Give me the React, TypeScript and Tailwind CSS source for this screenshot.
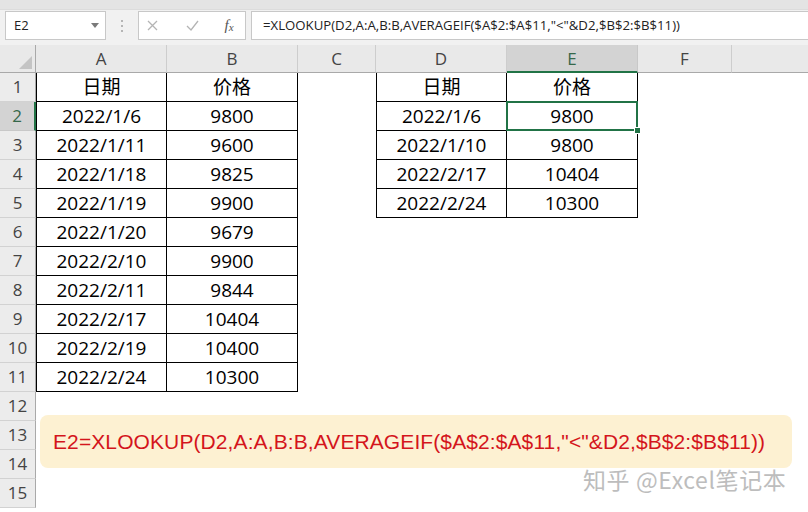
import React from 'react'

const COLS = ['A', 'B', 'C', 'D', 'E', 'F', 'G']

const COL_A = ['日期', '2022/1/6', '2022/1/11', '2022/1/18', '2022/1/19', '2022/1/20', '2022/2/10', '2022/2/11', '2022/2/17', '2022/2/19', '2022/2/24']
const COL_B = ['价格', '9800', '9600', '9825', '9900', '9679', '9900', '9844', '10404', '10400', '10300']
const COL_D = ['日期', '2022/1/6', '2022/1/10', '2022/2/17', '2022/2/24']
const COL_E = ['价格', '9800', '9800', '10404', '10300']

const FORMULA = '=XLOOKUP(D2,A:A,B:B,AVERAGEIF($A$2:$A$11,"<"&D2,$B$2:$B$11))'

function cellValue(col: string, row: number): string {
  if (col === 'A') return COL_A[row - 1] ?? ''
  if (col === 'B') return COL_B[row - 1] ?? ''
  if (col === 'D') return COL_D[row - 1] ?? ''
  if (col === 'E') return COL_E[row - 1] ?? ''
  return ''
}

function isBordered(col: string, row: number) {
  if ((col === 'A' || col === 'B') && row <= 11) return true
  if ((col === 'D' || col === 'E') && row <= 5) return true
  return false
}

function FormulaBar() {
  return (
    <div className="h-[45px] bg-[#f1f1f1] flex flex-col">
      <div className="h-[10px] bg-[#e4e4e4] border-b border-[#dcdcdc]" />
      <div className="flex items-stretch h-[29px] mt-[1px] pl-[5px]">
        {/* name box */}
        <div className="w-[101px] bg-white border border-[#c8c8c8] flex items-center justify-between pl-[8px] pr-[6px]">
          <span className="text-[13px] text-[#222] font-['Open_Sans',sans-serif]">E2</span>
          <svg width="8" height="5" viewBox="0 0 8 5">
            <path d="M0 0 L8 0 L4 5 Z" fill="#7a7a7a" />
          </svg>
        </div>
        {/* grip dots */}
        <div className="w-[32px] flex flex-col items-center justify-center gap-[3px]">
          <span className="w-[2px] h-[2px] bg-[#b5b5b5]" />
          <span className="w-[2px] h-[2px] bg-[#b5b5b5]" />
          <span className="w-[2px] h-[2px] bg-[#b5b5b5]" />
        </div>
        {/* cancel / enter / fx */}
        <div className="w-[108px] bg-white border border-[#c8c8c8] flex items-center">
          <div className="w-[26px] flex justify-center">
            <svg width="11" height="11" viewBox="0 0 11 11">
              <path d="M1 1 L10 10 M10 1 L1 10" stroke="#b4b4b4" strokeWidth="1.3" />
            </svg>
          </div>
          <div className="w-[54px] flex justify-center">
            <svg width="13" height="11" viewBox="0 0 13 11">
              <path d="M1 6 L5 10 L12 1" stroke="#b4b4b4" strokeWidth="1.3" fill="none" />
            </svg>
          </div>
          <div className="w-[20px] flex justify-center font-['Liberation_Serif',serif] italic text-[#555] leading-none">
            <span className="text-[15px]">f</span>
            <span className="text-[11px] mt-[4px]">x</span>
          </div>
        </div>
        {/* formula input */}
        <div className="flex-1 ml-[5px] bg-white border border-[#c8c8c8] border-r-0 flex items-center pl-[11px]">
          <span className="text-[13.2px] text-[#222] font-['Open_Sans',sans-serif]">{FORMULA}</span>
        </div>
      </div>
    </div>
  )
}

function Sheet() {
  const rows = Array.from({ length: 15 }, (_, i) => i + 1)
  return (
    <div className="w-[808px] overflow-hidden">
      <div className="grid w-[932px] grid-cols-[36px_131px_131px_78px_131px_131px_94px_200px] grid-rows-[28px_repeat(15,29px)] font-['Open_Sans','Noto_Sans_CJK_SC',sans-serif]">
        {/* corner */}
        <div className="bg-[#e9e9e9] border-r border-b border-[#a9a9a9] flex items-end justify-end pr-[3px] pb-[3px]">
          <svg width="13" height="13" viewBox="0 0 13 13">
            <path d="M13 0 L13 13 L0 13 Z" fill="#c4c4c4" />
          </svg>
        </div>
        {COLS.map((c) =>
          c === 'E' ? (
            <div key={c} className="bg-[#d3d3d3] border-r border-[#c8c8c8] border-b-2 border-b-[#217346] flex items-center justify-center text-[17px] text-[#36684a] pt-[2px]">
              {c}
            </div>
          ) : (
            <div key={c} className="bg-[#e9e9e9] border-r border-[#cdcdcd] border-b border-b-[#a9a9a9] flex items-center justify-center text-[17px] text-[#444]">
              {/* G's letter sits past the window edge */}
              {c === 'G' ? '' : c}
            </div>
          )
        )}
        {rows.map((r) => (
          <React.Fragment key={r}>
            {r === 2 ? (
              <div className="bg-[#d3d3d3] border-b border-[#c8c8c8] border-r-2 border-r-[#217346] flex items-center justify-center text-[17px] text-[#36684a]">
                {r}
              </div>
            ) : (
              <div className="bg-[#ececec] border-b border-[#d2d2d2] border-r border-r-[#a9a9a9] flex items-center justify-center text-[17px] text-[#444]">
                {r}
              </div>
            )}
            {COLS.map((c) => {
              const bordered = isBordered(c, r)
              const leftEdge = bordered && (c === 'A' || c === 'D')
              const active = c === 'E' && r === 2
              return (
                <div
                  key={c}
                  className={
                    'relative flex items-center justify-center text-[19px] text-black ' +
                    (bordered ? 'border-r border-b border-black ' : '') +
                    (leftEdge ? 'border-l ' : '')
                  }
                >
                  {cellValue(c, r)}
                  {active && (
                    <>
                      <div className="absolute -top-[1px] -left-[1px] -right-[1px] -bottom-[1px] border-2 border-[#217346]" />
                      <div className="absolute -right-[4px] -bottom-[4px] w-[7px] h-[7px] bg-[#217346] border border-white z-10" />
                    </>
                  )}
                </div>
              )
            })}
          </React.Fragment>
        ))}
      </div>
    </div>
  )
}

export default function App() {
  return (
    <div className="relative w-[808px] h-[512px] overflow-hidden bg-white">
      <FormulaBar />
      <Sheet />

      {/* annotation box */}
      <div className="absolute left-[40px] top-[415px] w-[752px] h-[53px] rounded-[8px] bg-[#fdf1d2] flex items-center pl-[13px]">
        <span className="text-[21px] tracking-[0.1px] text-[#d4151c] font-['Liberation_Sans',sans-serif] leading-none">
          E2=XLOOKUP(D2,A:A,B:B,AVERAGEIF($A$2:$A$11,"&lt;"&amp;D2,$B$2:$B$11))
        </span>
      </div>

      {/* watermark */}
      <div className="absolute left-[583px] top-[468px] text-[23px] tracking-[0.6px] leading-none text-[#bdbdbd] font-['Noto_Sans_CJK_SC',sans-serif] [text-shadow:0_0_2px_#ffffff]">
        知乎 @Excel笔记本
      </div>
    </div>
  )
}
